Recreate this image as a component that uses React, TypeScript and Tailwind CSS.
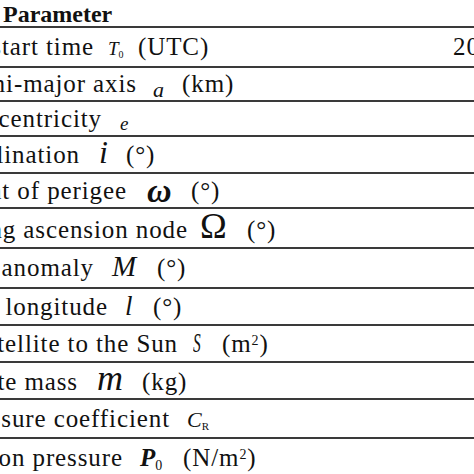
import type { ReactNode } from 'react';

type Row = {
  h: string;
  lw: string;
  label: string;
  sw: string;
  sym: ReactNode;
  unit?: ReactNode;
  value?: string;
};

const it = "font-['Liberation_Serif',serif] italic";

const rows: Row[] = [
  {
    h: 'h-[40px]',
    lw: 'w-[94px]',
    label: 'Orbit start time',
    sw: 'ml-[14px] w-[30px]',
    sym: (
      <span className={`${it} text-[19px]`}>
        T<sub className="text-[10px] not-italic">0</sub>
      </span>
    ),
    unit: '(UTC)',
    value: '2020-06-01 00:00:00',
  },
  {
    h: 'h-[34px]',
    lw: 'w-[137px]',
    label: 'Semi-major axis',
    sw: 'ml-[16px] w-[29px]',
    sym: <span className={`${it} relative top-[5px] text-[22px]`}>a</span>,
    unit: '(km)',
  },
  {
    h: 'h-[35px]',
    lw: 'w-[102px]',
    label: 'Eccentricity',
    sw: 'ml-[18px] w-[30px]',
    sym: <span className={`${it} relative top-[3px] text-[19px]`}>e</span>,
  },
  {
    h: 'h-[37px]',
    lw: 'w-[80px]',
    label: 'Inclination',
    sw: 'ml-[19px] w-[27px]',
    sym: <span className={`${it} text-[32px] leading-none`}>i</span>,
    unit: '(°)',
  },
  {
    h: 'h-[35px]',
    lw: 'w-[127px]',
    label: 'Argument of perigee',
    sw: 'ml-[20px] w-[44px]',
    sym: <span className={`${it} relative top-[3px] text-[34px] font-bold leading-none`}>ω</span>,
    unit: '(°)',
  },
  {
    h: 'h-[40px]',
    lw: 'w-[188px]',
    label: 'Right ascending ascension node',
    sw: 'ml-[12px] w-[47px]',
    sym: <span className="font-['Liberation_Serif',serif] text-[36px] leading-none">Ω</span>,
    unit: '(°)',
  },
  {
    h: 'h-[40px]',
    lw: 'w-[94px]',
    label: 'Mean anomaly',
    sw: 'ml-[18px] w-[45px]',
    sym: <span className={`${it} text-[29px] leading-none`}>M</span>,
    unit: '(°)',
  },
  {
    h: 'h-[37px]',
    lw: 'w-[108px]',
    label: 'Mean longitude',
    sw: 'ml-[17px] w-[28px]',
    sym: <span className={`${it} text-[27px] leading-none`}>l</span>,
    unit: '(°)',
  },
  {
    h: 'h-[37px]',
    lw: 'w-[178px]',
    label: 'Area of satellite to the Sun',
    sw: 'ml-[15px] w-[29px]',
    sym: (
      <span className={`${it} inline-block origin-left scale-x-[0.55] text-[28px] leading-none`}>S</span>
    ),
    unit: (
      <>
        (m<sup className="text-[14px]">2</sup>)
      </>
    ),
  },
  {
    h: 'h-[37px]',
    lw: 'w-[78px]',
    label: 'Satellite mass',
    sw: 'ml-[19px] w-[45px]',
    sym: <span className={`${it} text-[36px] leading-none`}>m</span>,
    unit: '(kg)',
  },
  {
    h: 'h-[39px]',
    lw: 'w-[170px]',
    label: 'Radiation pressure coefficient',
    sw: 'ml-[17px] w-[40px]',
    sym: (
      <span className={`${it} text-[22px]`}>
        C<sub className="text-[11px] not-italic">R</sub>
      </span>
    ),
  },
  {
    h: 'h-[40px]',
    lw: 'w-[123px]',
    label: 'Solar radiation pressure',
    sw: 'ml-[17px] w-[43px]',
    sym: (
      <span className={`${it} text-[25px] font-bold`}>
        P<sub className="text-[14px] font-normal not-italic">0</sub>
      </span>
    ),
    unit: (
      <>
        (N/m<sup className="text-[14px]">2</sup>)
      </>
    ),
  },
];

export default function App() {
  return (
    <div className="h-[474px] w-[474px] overflow-hidden bg-white text-[25px] tracking-[0.9px] text-[#111] font-['Liberation_Serif',serif]">
      <div className="flex h-[26px] items-center pl-[3px] pt-[2px] text-[24px] font-bold tracking-normal">Parameter</div>
      {rows.map((r) => (
        <div key={r.label} className={`${r.h} flex items-center border-t-2 border-[#3a3a3a]`}>
          <div className="flex w-full items-baseline whitespace-nowrap">
            <div className={`${r.lw} flex shrink-0 justify-end`}>
              <span className="shrink-0">{r.label}</span>
            </div>
            <div className={`${r.sw} shrink-0 tracking-normal`}>{r.sym}</div>
            {r.unit && <span className="shrink-0">{r.unit}</span>}
            {r.value && <span className="ml-auto w-[21px] shrink-0">{r.value}</span>}
          </div>
        </div>
      ))}
    </div>
  );
}
